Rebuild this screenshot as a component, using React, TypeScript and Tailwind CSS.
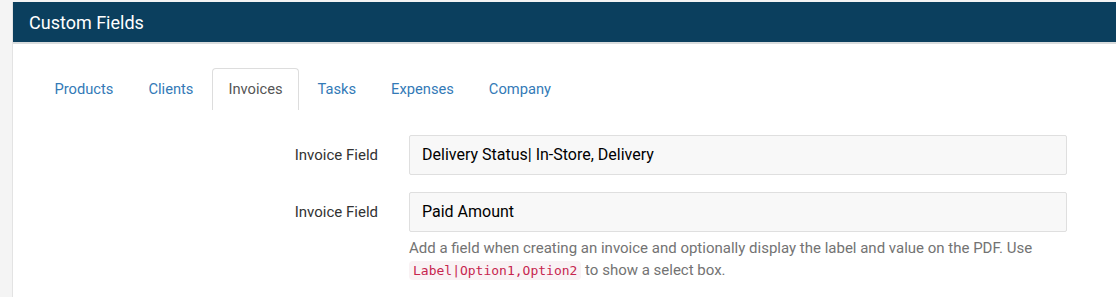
import React from "react";

const tabs = ["Products", "Clients", "Invoices", "Tasks", "Expenses", "Company"];

export default function App() {
  return (
    <div
      className="h-[297px] w-[1116px] overflow-hidden bg-[#f4f4f4] pt-[2px] pl-[12px]"
      style={{ fontFamily: "Roboto, 'Liberation Sans', sans-serif" }}
    >
      <div className="h-[400px] w-[1120px] border-l border-[#e3e3e3] bg-white">
        <div className="flex h-[40px] items-center bg-[#0b3f5e] pl-[16px] text-[18px] text-white border-b-2 border-[#d9dcdd] box-content">
          Custom Fields
        </div>
        <div className="pt-[24px] pl-[25px]">
          <div className="flex h-[42px] items-end">
            {tabs.map((t) => (
              <div
                key={t}
                className={
                  t === "Invoices"
                    ? "mr-[2px] flex h-[42px] items-center rounded-t-[4px] border border-b-0 border-[#dddddd] bg-white px-[15.5px] text-[14.7px] text-[#555555]"
                    : "mr-[2px] flex h-[42px] items-center border border-transparent px-[15.5px] text-[14.7px] text-[#337ab7]"
                }
              >
                {t}
              </div>
            ))}
          </div>
          <div className="mt-[25px] flex flex-col gap-[17px]">
            <div className="flex items-center">
              <div className="w-[340px] text-right text-[15px] text-[#333333]">Invoice Field</div>
              <div className="ml-[31px] flex h-[40px] w-[658px] items-center rounded-[2px] border border-[#dfdfdf] bg-[#f8f8f8] pl-[12px] text-[16px] text-black">
                Delivery Status| In-Store, Delivery
              </div>
            </div>
            <div className="flex items-start">
              <div className="flex h-[40px] w-[340px] items-center justify-end text-[15px] text-[#333333]">Invoice Field</div>
              <div className="ml-[31px] w-[658px]">
                <div className="flex h-[40px] items-center rounded-[2px] border border-[#dfdfdf] bg-[#f8f8f8] pl-[12px] text-[16px] text-black">
                  Paid Amount
                </div>
                <div className="mt-[5px] text-[15px] leading-[22px] text-[#737373]">
                  Add a field when creating an invoice and optionally display the label and value on the PDF. Use{" "}
                  <code
                    className="rounded-[4px] bg-[#f9f2f4] px-[4px] py-[2px] text-[13px] text-[#c7254e]"
                    style={{ fontFamily: "'DejaVu Sans Mono', 'Liberation Mono', monospace" }}
                  >
                    Label|Option1,Option2
                  </code>{" "}
                  to show a select box.
                </div>
              </div>
            </div>
          </div>
        </div>
      </div>
    </div>
  );
}
